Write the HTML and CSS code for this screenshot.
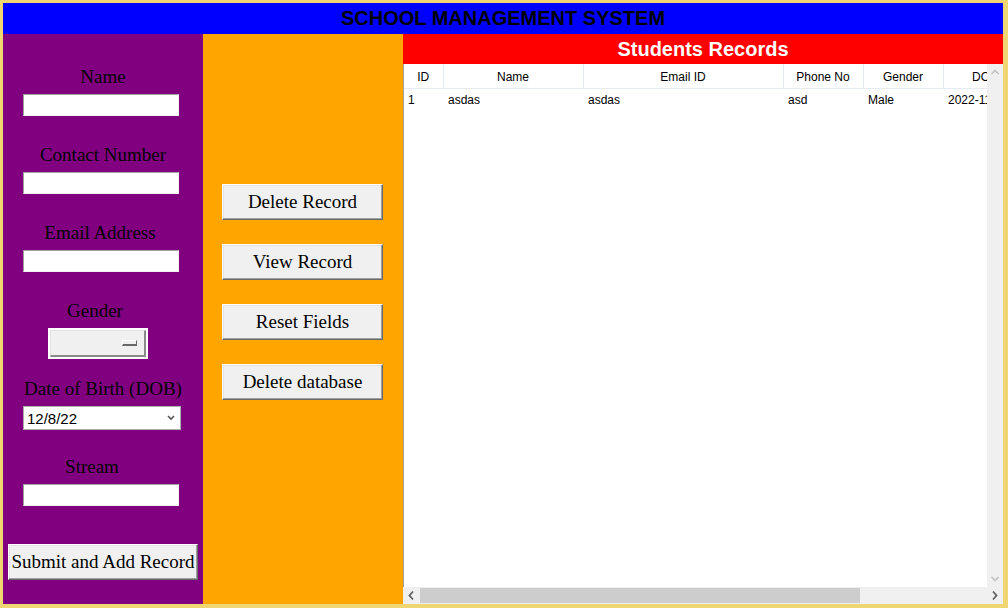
FILE: index.html
```html
<!DOCTYPE html>
<html lang="en">
<head>
    <meta charset="UTF-8">
    <title>School Management System</title>
    <link rel="stylesheet" href="styles.css">
</head>
<body>
    <div class="window">
        <div class="app-title">SCHOOL MANAGEMENT SYSTEM</div>

        <div class="main">
            <!-- Student entry form -->
            <div class="form-panel">
                <div class="field">
                    <div class="field-label">Name</div>
                    <input class="entry" type="text">
                </div>
                <div class="field">
                    <div class="field-label">Contact Number</div>
                    <input class="entry" type="text">
                </div>
                <div class="field">
                    <div class="field-label shift-sm">Email Address</div>
                    <input class="entry" type="text">
                </div>
                <div class="field">
                    <div class="field-label shift-md">Gender</div>
                    <div class="option-menu">
                        <div class="option-face">
                            <span class="option-indicator"></span>
                        </div>
                    </div>
                </div>
                <div class="field">
                    <div class="field-label">Date of Birth (DOB)</div>
                    <div class="date-entry">
                        <span>12/8/22</span>
                        <svg class="date-arrow" width="10" height="8" viewBox="0 0 10 8">
                            <path d="M2 2 L5 5 L8 2" fill="none" stroke="#555" stroke-width="1.6"/>
                        </svg>
                    </div>
                </div>
                <div class="field">
                    <div class="field-label shift-lg">Stream</div>
                    <input class="entry" type="text">
                </div>
                <button class="tk-button submit-button">Submit and Add Record</button>
            </div>

            <!-- Record actions -->
            <div class="actions-panel">
                <button class="tk-button action-button">Delete Record</button>
                <button class="tk-button action-button">View Record</button>
                <button class="tk-button action-button">Reset Fields</button>
                <button class="tk-button action-button">Delete database</button>
            </div>

            <!-- Records list -->
            <div class="records-panel">
                <div class="records-title">Students Records</div>
                <div class="tree-row">
                    <div class="tree">
                        <table class="tree-table">
                            <colgroup>
                                <col class="col-id">
                                <col class="col-name">
                                <col class="col-email">
                                <col class="col-phone">
                                <col class="col-gender">
                                <col class="col-dob">
                                <col class="col-stream">
                            </colgroup>
                            <thead>
                                <tr>
                                    <th>ID</th>
                                    <th>Name</th>
                                    <th>Email ID</th>
                                    <th>Phone No</th>
                                    <th>Gender</th>
                                    <th>DOB</th>
                                    <th>Stream</th>
                                </tr>
                            </thead>
                            <tbody>
                                <tr>
                                    <td class="cell-id">1</td>
                                    <td>asdas</td>
                                    <td>asdas</td>
                                    <td>asd</td>
                                    <td>Male</td>
                                    <td>2022-11-29</td>
                                    <td>asd</td>
                                </tr>
                            </tbody>
                        </table>
                    </div>
                    <div class="vscroll">
                        <svg width="16" height="17" viewBox="0 0 16 17">
                            <path d="M4.5 10 L8 6.5 L11.5 10" fill="none" stroke="#c2c2c2" stroke-width="1.6"/>
                        </svg>
                        <svg width="16" height="17" viewBox="0 0 16 17">
                            <path d="M4.5 7 L8 10.5 L11.5 7" fill="none" stroke="#c2c2c2" stroke-width="1.6"/>
                        </svg>
                    </div>
                </div>
                <div class="hscroll">
                    <svg width="17" height="17" viewBox="0 0 17 17">
                        <path d="M10 4.5 L6.5 8.5 L10 12.5" fill="none" stroke="#606060" stroke-width="1.8"/>
                    </svg>
                    <div class="hscroll-trough">
                        <div class="hscroll-thumb"></div>
                    </div>
                    <svg width="16" height="17" viewBox="0 0 16 17">
                        <path d="M6 4.5 L9.5 8.5 L6 12.5" fill="none" stroke="#606060" stroke-width="1.8"/>
                    </svg>
                </div>
            </div>
        </div>
    </div>
</body>
</html>
```

FILE: styles.css
```css
html, body {
    margin: 0;
    padding: 0;
}
body {
    width: 1008px;
    height: 608px;
    overflow: hidden;
    background-color: #f0d673;
}
.window {
    width: 1000px;
    height: 601px;
    margin: 3px 5px 4px 3px;
    display: flex;
    flex-direction: column;
}
.app-title {
    height: 31px;
    line-height: 31px;
    background-color: #0000ff;
    color: #000;
    text-align: center;
    font-family: "Liberation Sans", Arial, sans-serif;
    font-weight: bold;
    font-size: 20px;
}
.main {
    display: flex;
    height: 570px;
}

/* form panel */
.form-panel {
    width: 200px;
    background-color: #800080;
    padding-top: 32px;
    box-sizing: border-box;
    display: flex;
    flex-direction: column;
}
.field {
    height: 78px;
    display: flex;
    flex-direction: column;
}
.field-label {
    height: 22px;
    line-height: 22px;
    margin-bottom: 6px;
    text-align: center;
    font-family: "Liberation Serif", "Times New Roman", serif;
    font-size: 19px;
    color: #000;
    white-space: nowrap;
}
.shift-sm {
    padding-right: 6px;
}
.shift-md {
    padding-right: 16px;
}
.shift-lg {
    padding-right: 22px;
}
.entry {
    width: 156px;
    height: 22px;
    margin: 0 0 0 20px;
    padding: 0 2px;
    box-sizing: border-box;
    border: 1px solid;
    border-color: #a0a0a0 #f0f0f0 #f0f0f0 #a0a0a0;
    background-color: #fff;
    outline: none;
}
.option-menu {
    width: 100px;
    height: 31px;
    margin-left: 45px;
    box-sizing: border-box;
    border: 2px solid #fff;
}
.option-face {
    height: 100%;
    box-sizing: border-box;
    background-color: #f0f0f0;
    border-top: 1px solid #e3e3e3;
    border-left: 1px solid #e3e3e3;
    border-right: 2px solid #8a8a8a;
    border-bottom: 2px solid #8a8a8a;
    display: flex;
    align-items: center;
    justify-content: flex-end;
    padding-right: 7px;
}
.option-indicator {
    width: 15px;
    height: 6px;
    box-sizing: border-box;
    background-color: #f0f0f0;
    border-top: 1px solid #fff;
    border-left: 1px solid #fff;
    border-right: 1px solid #696969;
    border-bottom: 2px solid #696969;
}
.date-entry {
    width: 158px;
    height: 24px;
    margin-left: 20px;
    box-sizing: border-box;
    border: 1px solid #acacac;
    background-color: #fff;
    display: flex;
    align-items: center;
    justify-content: space-between;
    padding: 0 4px 0 3px;
    font-family: "Liberation Sans", Arial, sans-serif;
    font-size: 15px;
    color: #000;
}
.date-arrow {
    display: block;
}
.tk-button {
    box-sizing: border-box;
    background-color: #f0f0f0;
    border-top: 1px solid #fff;
    border-left: 1px solid #fff;
    border-right: 1px solid #696969;
    border-bottom: 1px solid #696969;
    box-shadow: inset -1px -1px 0 #a0a0a0, inset 1px 1px 0 #e3e3e3;
    font-family: "Liberation Serif", "Times New Roman", serif;
    font-size: 19px;
    color: #000;
    padding: 0;
    white-space: nowrap;
    cursor: pointer;
}
.submit-button {
    width: 190px;
    height: 36px;
    margin: 10px 0 0 5px;
}

/* actions panel */
.actions-panel {
    width: 200px;
    background-color: #ffa500;
    padding: 150px 0 0 19px;
    box-sizing: border-box;
    display: flex;
    flex-direction: column;
    gap: 24px;
}
.action-button {
    width: 161px;
    height: 36px;
}

/* records panel */
.records-panel {
    width: 600px;
    display: flex;
    flex-direction: column;
}
.records-title {
    height: 30px;
    line-height: 30px;
    background-color: #ff0000;
    color: #fff;
    text-align: center;
    font-family: "Liberation Sans", Arial, sans-serif;
    font-weight: bold;
    font-size: 20px;
}
.tree-row {
    display: flex;
    height: 523px;
}
.tree {
    width: 584px;
    box-sizing: border-box;
    border-left: 1px solid #a0a0a0;
    background-color: #fff;
    overflow: hidden;
}
.tree-table {
    table-layout: fixed;
    border-collapse: collapse;
    width: 723px;
    font-family: "Liberation Sans", Arial, sans-serif;
    font-size: 12px;
    color: #000;
}
.col-id { width: 39px; }
.col-name { width: 140px; }
.col-email { width: 200px; }
.col-phone { width: 80px; }
.col-gender { width: 80px; }
.col-dob { width: 84px; }
.col-stream { width: 100px; }
.tree-table th {
    height: 22px;
    padding: 2px 0 0;
    font-weight: normal;
    text-align: center;
    border-right: 1px solid #e5ebf3;
    border-bottom: 1px solid #e5ebf3;
    white-space: nowrap;
    overflow: hidden;
}
.tree-table td {
    height: 21px;
    padding: 0 4px 0 5px;
    text-align: left;
    white-space: nowrap;
    overflow: hidden;
}
.tree-table .cell-id {
    padding-left: 4px;
}
.vscroll {
    width: 16px;
    background-color: #f0f0f0;
    display: flex;
    flex-direction: column;
    justify-content: space-between;
}
.vscroll svg, .hscroll svg {
    display: block;
    flex-shrink: 0;
}
.hscroll {
    height: 17px;
    background-color: #f0f0f0;
    display: flex;
}
.hscroll-trough {
    flex: 1;
    display: flex;
    align-items: stretch;
    padding: 1px 0;
}
.hscroll-thumb {
    width: 440px;
    background-color: #cdcdcd;
}
```
